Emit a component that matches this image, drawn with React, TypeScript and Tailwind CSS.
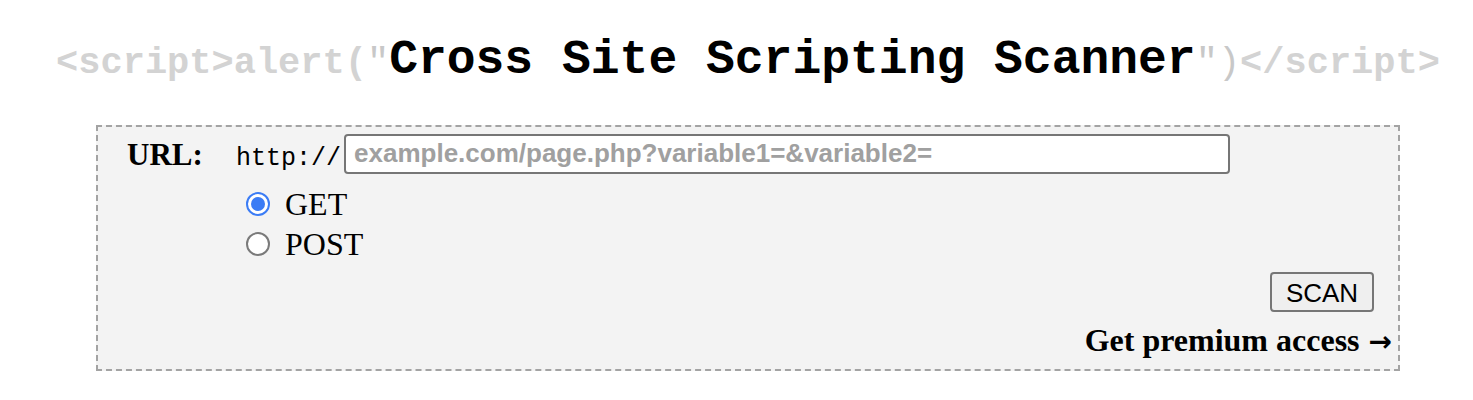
export default function App() {
  return (
    <div className="min-h-[400px] bg-white pl-[23px] pt-[34px]">
      <h1 className="text-center font-['Liberation_Mono','Courier_New',monospace] font-bold leading-[1.1] whitespace-nowrap">
        <span className="text-[37px] text-[#d3d3d3]">&lt;script&gt;alert(</span>
        <span className="text-[37px] font-normal text-[#c8c8c8]">"</span>
        <span className="text-[48px] text-black">Cross Site Scripting Scanner</span>
        <span className="text-[37px] font-normal text-[#c8c8c8]">")</span>
        <span className="text-[37px] text-[#d3d3d3]">&lt;/script&gt;</span>
      </h1>

      <form className="mx-auto mt-[38px] w-[1304px] border-2 border-dashed border-[#a3a3a3] bg-[#f3f3f3] pt-[7px] pb-[5px]">
        <div className="flex h-[40px] items-center">
          <div className="flex items-baseline pt-[3px]">
            <label className="w-[138px] pl-[29px] font-['Liberation_Serif','Times_New_Roman',serif] text-[31px] font-bold leading-none text-black">
              URL:
            </label>
            <span className="font-['Liberation_Mono','Courier_New',monospace] text-[25px] leading-none text-black">http://</span>
          </div>
          <input
            type="text"
            placeholder="example.com/page.php?variable1=&variable2="
            className="ml-[3px] h-[40px] w-[886px] rounded-[4px] border-2 border-[#767676] bg-white px-[8px] font-['Liberation_Sans',Arial,sans-serif] text-[26px] font-bold placeholder:text-[#a0a0a0] outline-none"
          />
        </div>

        <div className="mt-[10px] flex flex-col pl-[148px] font-['Liberation_Serif','Times_New_Roman',serif] text-[32px] text-black">
          <label className="flex h-[40px] items-center gap-[15px]">
            <span className="flex h-[24px] w-[24px] items-center justify-center rounded-full border-[2.5px] border-[#3b7cf5] bg-white">
              <span className="h-[14px] w-[14px] rounded-full bg-[#3b7cf5]" />
            </span>
            GET
          </label>
          <label className="flex h-[40px] items-center gap-[15px]">
            <span className="h-[24px] w-[24px] rounded-full border-2 border-[#7a7a7a] bg-white" />
            POST
          </label>
        </div>

        <div className="mt-[8px] flex justify-end pr-[24px]">
          <button
            type="button"
            className="h-[40px] w-[104px] rounded-[4px] border-2 border-[#767676] bg-[#efefef] font-['Liberation_Sans',Arial,sans-serif] text-[26px] text-black"
          >
            SCAN
          </button>
        </div>

        <div className="mt-[4px] flex h-[48px] items-center justify-end pr-[6px] font-['Liberation_Serif','Times_New_Roman',serif] text-[32px] font-bold text-black">
          <a href="#" className="flex items-baseline">
            Get premium access
            <span className="ml-[9px] font-['DejaVu_Sans',sans-serif] text-[28px] font-bold leading-none">→</span>
          </a>
        </div>
      </form>
    </div>
  );
}
